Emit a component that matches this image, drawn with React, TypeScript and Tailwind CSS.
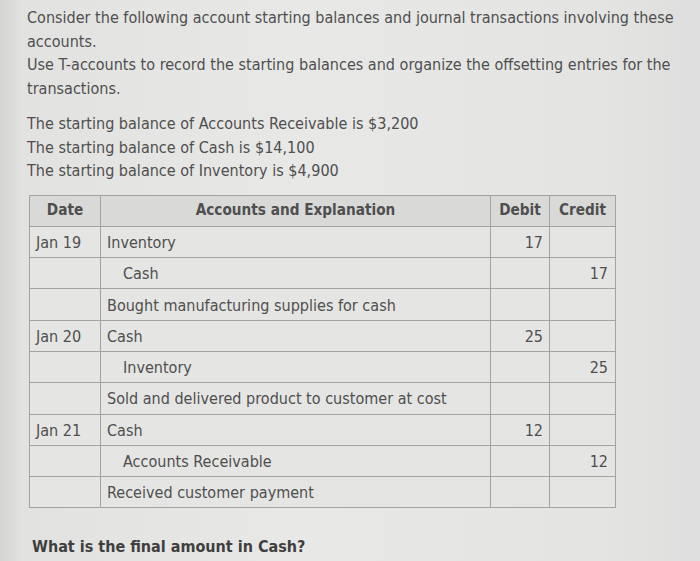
import React from "react";

type Row = { date?: string; text: string; indent?: boolean; debit?: string; credit?: string };

const rows: Row[] = [
  { date: "Jan 19", text: "Inventory", debit: "17" },
  { text: "Cash", indent: true, credit: "17" },
  { text: "Bought manufacturing supplies for cash" },
  { date: "Jan 20", text: "Cash", debit: "25" },
  { text: "Inventory", indent: true, credit: "25" },
  { text: "Sold and delivered product to customer at cost" },
  { date: "Jan 21", text: "Cash", debit: "12" },
  { text: "Accounts Receivable", indent: true, credit: "12" },
  { text: "Received customer payment" },
];

export default function App() {
  return (
    <div
      className="w-[700px] h-[561px] overflow-hidden text-[#4f4f4f] bg-[linear-gradient(to_right,#d4d4d2_0px,#e2e2e0_22px,#e8e8e6_300px,#e4e4e2_600px,#dedede_700px)]"
      style={{ fontFamily: '"DejaVu Sans Condensed", "DejaVu Sans", Verdana, sans-serif' }}
    >
      <div className="pl-[27px] pt-[6px] text-[16.05px] leading-[23.5px]">
        <p>
          Consider the following account starting balances and journal transactions involving these
          accounts.
          <br />
          Use T-accounts to record the starting balances and organize the offsetting entries for the
          transactions.
        </p>
        <p className="mt-[12px]">
          The starting balance of Accounts Receivable is $3,200
          <br />
          The starting balance of Cash is $14,100
          <br />
          The starting balance of Inventory is $4,900
        </p>
      </div>

      <table className="ml-[29px] mt-[12px] border-collapse text-[16.05px] table-fixed w-[586px]">
        <colgroup>
          <col className="w-[71px]" />
          <col className="w-[390px]" />
          <col className="w-[59px]" />
          <col className="w-[66px]" />
        </colgroup>
        <thead>
          <tr className="h-[31.3px] bg-[#d9d9d7] text-[15.2px]">
            <th className="border border-[#a3a3a1] text-center font-bold">Date</th>
            <th className="border border-[#a3a3a1] text-center font-bold">Accounts and Explanation</th>
            <th className="border border-[#a3a3a1] text-center font-bold">Debit</th>
            <th className="border border-[#a3a3a1] text-center font-bold">Credit</th>
          </tr>
        </thead>
        <tbody>
          {rows.map((r, i) => (
            <tr key={i} className="h-[31.3px] bg-[#e5e5e3]">
              <td className="border border-[#a3a3a1] pl-[6px] pt-[2px] whitespace-nowrap">{r.date ?? ""}</td>
              <td
                className={
                  r.indent
                    ? "border border-[#a3a3a1] pl-[22px] pt-[2px] whitespace-nowrap"
                    : "border border-[#a3a3a1] pl-[6px] pt-[2px] whitespace-nowrap"
                }
              >
                {r.text}
              </td>
              <td className="border border-[#a3a3a1] pr-[6px] pt-[2px] text-right">{r.debit ?? ""}</td>
              <td className="border border-[#a3a3a1] pr-[7px] pt-[2px] text-right">{r.credit ?? ""}</td>
            </tr>
          ))}
        </tbody>
      </table>

      <p className="ml-[32px] mt-[27px] text-[16px] font-bold text-[#3f3f3f]">
        What is the final amount in Cash?
      </p>
    </div>
  );
}
